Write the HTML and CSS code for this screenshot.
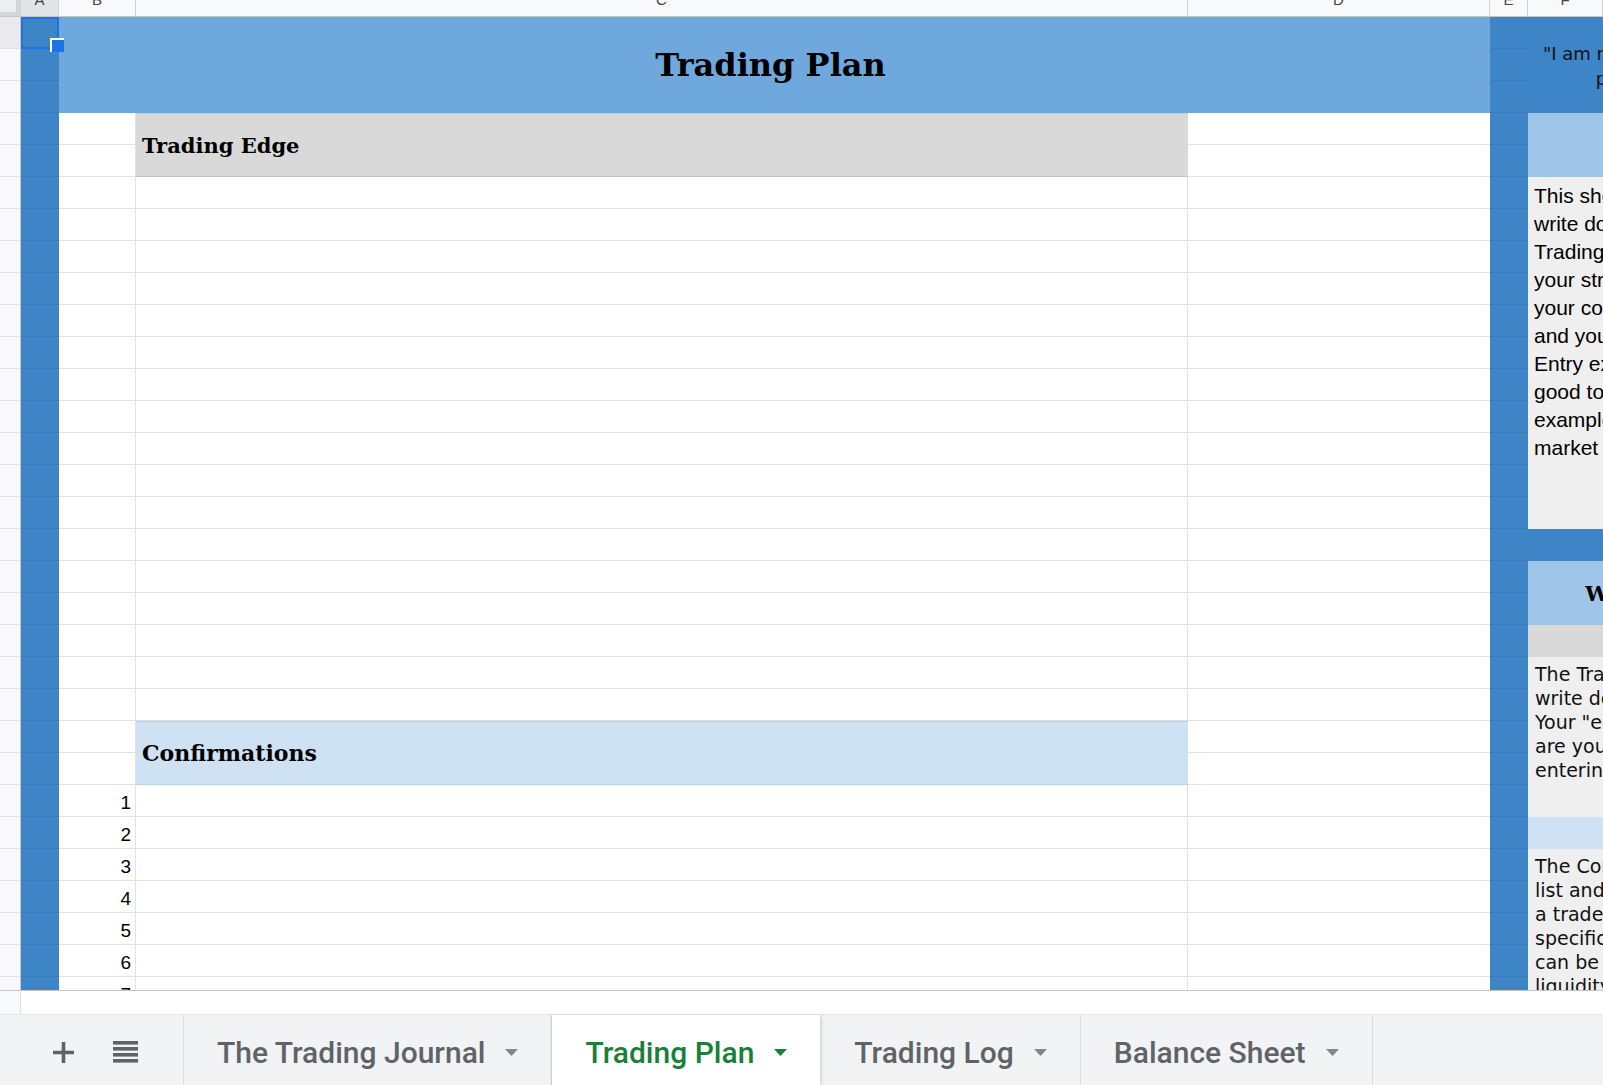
FILE: index.html
```html
<!DOCTYPE html>
<html lang="en">
<head>
    <meta charset="UTF-8">
    <meta name="viewport" content="width=device-width, initial-scale=1.0">
    <title>Trading Plan - Google Sheets</title>
    <link rel="stylesheet" href="styles.css">
</head>
<body>

<div class="sheet">

    <!-- column letters -->
    <div class="colheads">
        <div class="corner"></div>
        <div class="ch ch-sel"><span>A</span></div>
        <div class="ch"><span>B</span></div>
        <div class="ch"><span>C</span></div>
        <div class="ch"><span>D</span></div>
        <div class="ch"><span>E</span></div>
        <div class="ch"><span>F</span></div>
    </div>

    <div class="main">
        <!-- row numbers (scrolled, only the lines show) -->
        <div class="rowheads">
            <div class="rh rh-sel"></div>
            <div class="rh"></div><div class="rh"></div><div class="rh"></div><div class="rh"></div>
            <div class="rh"></div><div class="rh"></div><div class="rh"></div><div class="rh"></div>
            <div class="rh"></div><div class="rh"></div><div class="rh"></div><div class="rh"></div>
            <div class="rh"></div><div class="rh"></div><div class="rh"></div><div class="rh"></div>
            <div class="rh"></div><div class="rh"></div><div class="rh"></div><div class="rh"></div>
            <div class="rh"></div><div class="rh"></div><div class="rh"></div><div class="rh"></div>
            <div class="rh"></div><div class="rh"></div><div class="rh"></div><div class="rh"></div>
            <div class="rh"></div><div class="rh"></div>
        </div>

        <div class="grid">
            <div class="vline vline-b"></div>
            <div class="vline vline-c"></div>

            <div class="band band-a"></div>
            <div class="band band-e"></div>

            <div class="title">Trading Plan</div>

            <div class="section section-edge">Trading Edge</div>
            <div class="section section-conf">Confirmations</div>

            <div class="nums">
                <div>1</div><div>2</div><div>3</div><div>4</div><div>5</div><div>6</div><div>7</div>
            </div>

            <!-- notes column -->
            <div class="f f-dark f-r1">
                <div class="quote">
                    <p>"I am rich because I follow my</p>
                    <p>plan, not my ego."</p>
                </div>
            </div>
            <div class="f f-light2 f-r4"></div>
            <div class="f f-gray f-r6">
                <div class="note note-arial">
                    <p>This should be where you</p>
                    <p>write down your complete</p>
                    <p>Trading Edge. This is</p>
                    <p>your strategy, including</p>
                    <p>your confirmations</p>
                    <p>and your entry rules.</p>
                    <p>Entry examples are</p>
                    <p>good to include, for</p>
                    <p>example: a break of</p>
                    <p>market structure.</p>
                </div>
            </div>
            <div class="f f-dark f-r17"></div>
            <div class="f f-light2 f-r18">
                <div class="why">Why It Matters</div>
            </div>
            <div class="f f-mid f-r20"></div>
            <div class="f f-gray f-r21">
                <div class="note note-comic">
                    <p>The Trading Edge is where you</p>
                    <p>write down your strategy.</p>
                    <p>Your "edge" and the reasons</p>
                    <p>are your guide when</p>
                    <p>entering a trade.</p>
                </div>
            </div>
            <div class="f f-light3 f-r26"></div>
            <div class="f f-gray f-r27">
                <div class="note note-comic">
                    <p>The Confirmations are a</p>
                    <p>list and checklist before</p>
                    <p>a trade. Write down the</p>
                    <p>specific conditions that</p>
                    <p>can be important, such as</p>
                    <p>liquidity and volume.</p>
                </div>
            </div>

            <!-- active cell A1 -->
            <div class="selection"></div>
        </div>
    </div>

    <div class="hscroll"><div class="hs-left"></div></div>

    <!-- sheet tabs -->
    <div class="tabbar">
        <div class="tools">
            <svg class="tool" width="21" height="21" viewBox="0 0 21 21">
                <path d="M10.5 0V21M0 10.5H21" stroke="#5f6368" stroke-width="3.6" fill="none"/>
            </svg>
            <svg class="tool" width="25" height="22" viewBox="0 0 25 22">
                <rect x="0" y="0" width="25" height="3.6" fill="#5f6368"/>
                <rect x="0" y="6" width="25" height="3.6" fill="#5f6368"/>
                <rect x="0" y="12" width="25" height="3.6" fill="#5f6368"/>
                <rect x="0" y="18" width="25" height="3.6" fill="#5f6368"/>
            </svg>
        </div>
        <div class="tab">
            <span>The Trading Journal</span>
            <svg class="arrow" width="13" height="7" viewBox="0 0 13 7"><path d="M0 0H13L6.5 7Z"/></svg>
        </div>
        <div class="tab active">
            <span>Trading Plan</span>
            <svg class="arrow" width="13" height="7" viewBox="0 0 13 7"><path d="M0 0H13L6.5 7Z"/></svg>
        </div>
        <div class="tab">
            <span>Trading Log</span>
            <svg class="arrow" width="13" height="7" viewBox="0 0 13 7"><path d="M0 0H13L6.5 7Z"/></svg>
        </div>
        <div class="tab">
            <span>Balance Sheet</span>
            <svg class="arrow" width="13" height="7" viewBox="0 0 13 7"><path d="M0 0H13L6.5 7Z"/></svg>
        </div>
    </div>

</div>

</body>
</html>
```

FILE: styles.css
```css
/* Reset */
* {
    margin: 0;
    padding: 0;
    box-sizing: border-box;
}

body {
    font-family: 'Liberation Sans', Arial, sans-serif;
    color: #000;
    background-color: #fff;
    width: 1603px;
    height: 1085px;
    overflow: hidden;
}

.sheet {
    display: flex;
    flex-direction: column;
    height: 1085px;
}

/* Column headers */
.colheads {
    display: grid;
    grid-template-columns: 21px 38px 77px 1052px 302px 38px 1fr;
    height: 17px;
    background-color: #f8f9fa;
    border-bottom: 1px solid #c4c7c5;
    overflow: hidden;
}

.corner {
    background-color: #eceef1;
    border-right: 5px solid #d3d5d8;
    border-bottom: 4px solid #d3d5d8;
}

.ch {
    border-right: 1px solid #d0d3d6;
    text-align: center;
    color: #444;
    overflow: hidden;
}

.ch span {
    display: block;
    font-size: 15px;
    line-height: 15px;
    margin-top: -8px;
}

.ch-sel {
    background-color: #e1e4e8;
}

/* Body of the sheet */
.main {
    display: flex;
    height: 973px;
    overflow: hidden;
}

.rowheads {
    width: 21px;
    flex-shrink: 0;
    background-color: #f8f9fa;
    border-right: 1px solid #c4c7c5;
}

.rh {
    height: 32px;
    border-bottom: 1px solid #e0e0e0;
}

.rh-sel {
    background-color: #e8eaed;
}

.grid {
    flex: 1;
    display: grid;
    grid-template-columns: 38px 77px 1052px 302px 38px 75px;
    grid-template-rows: repeat(31, 32px);
    overflow: hidden;
    background-color: #fff;
    background-image: repeating-linear-gradient(to bottom, transparent 0, transparent 31px, #e2e2e2 31px, #e2e2e2 32px);
}

.vline {
    grid-row: 4 / 32;
    border-right: 1px solid #e2e2e2;
}

.vline-b { grid-column: 2; }
.vline-c { grid-column: 3; }

.band {
    grid-row: 1 / 32;
    background-color: #3d85c6;
    background-image: repeating-linear-gradient(to bottom, transparent 0, transparent 31px, rgba(0, 0, 0, 0.07) 31px, rgba(0, 0, 0, 0.07) 32px);
}

.band-a { grid-column: 1; }
.band-e { grid-column: 5; }

.title {
    grid-column: 2 / 5;
    grid-row: 1 / 4;
    background-color: #6fa8dc;
    display: flex;
    align-items: center;
    justify-content: center;
    font-family: 'DejaVu Serif', 'Liberation Serif', serif;
    font-weight: bold;
    font-size: 32px;
    padding-right: 8px;
}

.section {
    grid-column: 3;
    display: flex;
    align-items: center;
    padding-left: 6px;
    font-family: 'DejaVu Serif', 'Liberation Serif', serif;
    font-weight: bold;
    font-size: 21px;
}

.section-edge {
    grid-row: 4 / 6;
    background-color: #d9d9d9;
    border-top: 1px solid #c9c9c9;
    border-bottom: 1px solid #c2c2c2;
}

.section-conf {
    grid-row: 23 / 25;
    background-color: #cfe2f3;
    border-top: 1px solid #b9cfe3;
    border-bottom: 1px solid #b9cfe3;
    font-size: 22px;
}

.nums {
    grid-column: 2;
    grid-row: 25 / 32;
    display: grid;
    grid-auto-rows: 32px;
    font-size: 19px;
}

.nums div {
    display: flex;
    align-items: center;
    justify-content: flex-end;
    padding-right: 5px;
    padding-top: 3px;
}

/* Notes column F */
.f {
    grid-column: 6;
    overflow: visible;
    white-space: nowrap;
}

.f-dark { background-color: #3d85c6; }
.f-light2 { background-color: #9fc5e8; }
.f-light3 { background-color: #cfe2f3; }
.f-gray { background-color: #efefef; }
.f-mid { background-color: #d9d9d9; }

.f-r1 { grid-row: 1 / 4; display: flex; align-items: center; }
.f-r4 { grid-row: 4 / 6; }
.f-r6 { grid-row: 6 / 17; }
.f-r17 { grid-row: 17; }
.f-r18 { grid-row: 18 / 20; display: flex; align-items: center; }
.f-r20 { grid-row: 20; }
.f-r21 { grid-row: 21 / 26; }
.f-r26 { grid-row: 26; }
.f-r27 { grid-row: 27 / 32; }

.quote {
    flex-shrink: 0;
    width: 302px;
    text-align: center;
    font-family: 'DejaVu Sans', sans-serif;
    font-size: 18px;
    line-height: 25px;
    color: #111;
    padding-top: 2px;
}

.why {
    flex-shrink: 0;
    width: 292px;
    text-align: center;
    font-family: 'DejaVu Serif', 'Liberation Serif', serif;
    font-weight: bold;
    font-size: 21px;
}

.note-arial {
    font-size: 21px;
    line-height: 28px;
    padding: 5px 0 0 6px;
}

.note-comic {
    font-family: 'DejaVu Sans', sans-serif;
    font-size: 19px;
    line-height: 24px;
    padding: 5px 0 0 7px;
    color: #111;
}

/* Active cell */
.selection {
    grid-column: 1;
    grid-row: 1;
    border: 2px solid #1a73e8;
    position: relative;
}

.selection::after {
    content: '';
    position: absolute;
    right: -7px;
    bottom: -5px;
    width: 12px;
    height: 12px;
    background-color: #1a73e8;
    border-top: 2px solid #fff;
    border-left: 2px solid #fff;
}

/* Horizontal scroll strip */
.hscroll {
    height: 24px;
    border-top: 1px solid #c4c7c5;
    background-color: #fff;
}

.hs-left {
    width: 21px;
    height: 100%;
    background-color: #f8f9fa;
    border-right: 1px solid #e0e0e0;
}

/* Sheet tabs */
.tabbar {
    display: flex;
    height: 71px;
    background-color: #f1f3f4;
    border-top: 1px solid #e3e5e8;
}

.tools {
    width: 184px;
    flex-shrink: 0;
    display: flex;
    align-items: center;
    gap: 39px;
    padding: 4px 0 0 53px;
    border-right: 1px solid #dadce0;
}

.tab {
    display: flex;
    align-items: center;
    gap: 20px;
    padding: 5px 33px 0 33px;
    border-right: 1px solid #dadce0;
    font-family: Roboto, 'Liberation Sans', sans-serif;
    font-weight: 500;
    font-size: 30px;
    color: #5f6368;
}

.tab .arrow {
    fill: #80868b;
}

.tab.active {
    background-color: #fff;
    color: #188038;
    box-shadow: 0 1px 3px rgba(60, 64, 67, 0.25);
}

.tab.active .arrow {
    fill: #188038;
}
```
